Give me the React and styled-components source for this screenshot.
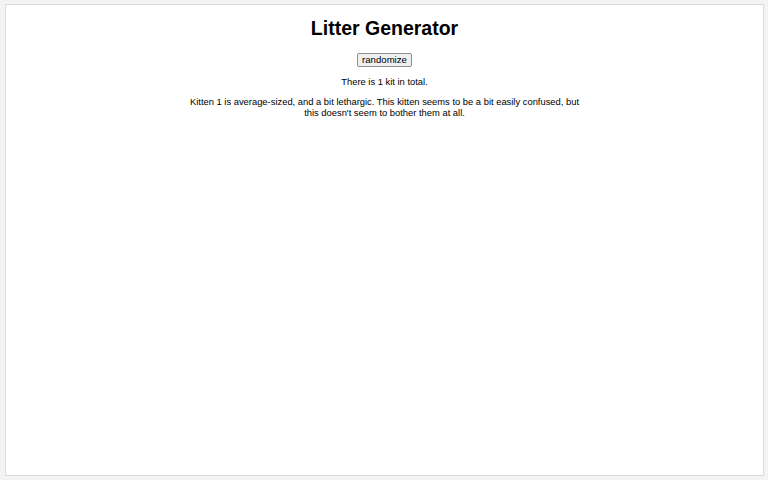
import React from "react";
import styled, { createGlobalStyle } from "styled-components";

const Global = createGlobalStyle`
  html, body { margin: 0; padding: 0; }
  body {
    background: #f3f3f3;
    font-family: "Liberation Sans", Arial, sans-serif;
  }
`;

const Page = styled.div`
  box-sizing: border-box;
  height: 480px;
  padding: 4px 4px 4px 5px;
`;

const Panel = styled.main`
  box-sizing: border-box;
  height: 472px;
  background: #fff;
  border: 1px solid #dcdcdc;
  display: flex;
  flex-direction: column;
  align-items: center;
  padding-top: 14px;
  color: #000;
`;

const Title = styled.h1`
  margin: 0;
  font-size: 19.5px;
  font-weight: bold;
  line-height: 18px;
`;

const Button = styled.button`
  margin-top: 16px;
  font-family: "Liberation Sans", Arial, sans-serif;
  font-size: 9.6px;
  padding: 1px 4px;
  background: #efefef;
  border: 1px solid #8f8f8f;
  border-radius: 2px;
  color: #000;
  line-height: 10px;
`;

const Text = styled.p`
  margin: ${(p) => p.$top}px 0 0;
  font-size: 9.4px;
  line-height: 11px;
  text-align: center;
  max-width: ${(p) => p.$max || 420}px;
`;

export default function App() {
  return (
    <>
      <Global />
      <Page>
        <Panel>
          <Title>Litter Generator</Title>
          <Button>randomize</Button>
          <Text $top={9}>There is 1 kit in total.</Text>
          <Text $top={9} $max={402}>
            Kitten 1 is average-sized, and a bit lethargic. This kitten seems to be a bit easily confused, but this doesn't seem to bother them at all.
          </Text>
        </Panel>
      </Page>
    </>
  );
}
